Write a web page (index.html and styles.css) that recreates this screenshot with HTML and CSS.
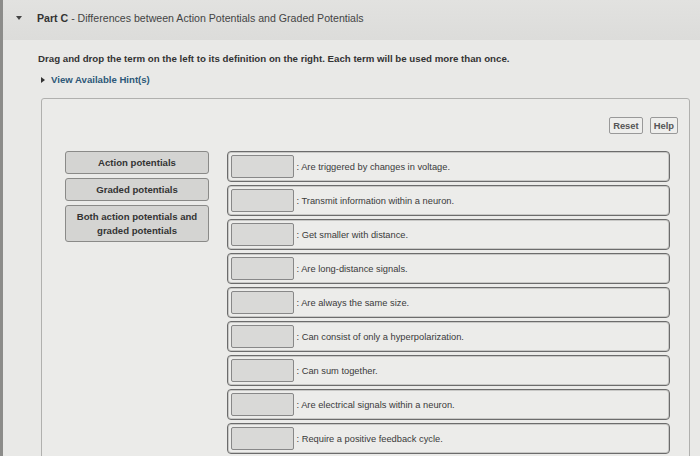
FILE: index.html
```html
<!DOCTYPE html>
<html>
<head>
<meta charset="utf-8">
<link rel="stylesheet" href="styles.css">
</head>
<body>
<div class="page">
  <div class="part-head">
    <span class="caret-down"></span>
    <span class="part-title"><b>Part C</b> - Differences between Action Potentials and Graded Potentials</span>
  </div>
  <div class="content">
    <p class="instr">Drag and drop the term on the left to its definition on the right. Each term will be used more than once.</p>
    <div class="hint"><span class="caret-right"></span>View Available Hint(s)</div>
    <div class="box">
      <div class="toolbar">
        <span class="btn">Reset</span>
        <span class="btn">Help</span>
      </div>
      <div class="dnd">
        <div class="terms">
          <div class="term">Action potentials</div>
          <div class="term">Graded potentials</div>
          <div class="term tall">Both action potentials and graded potentials</div>
        </div>
        <div class="targets">
          <div class="row"><span class="slot"></span><span class="def">: Are triggered by changes in voltage.</span></div>
          <div class="row"><span class="slot"></span><span class="def">: Transmit information within a neuron.</span></div>
          <div class="row"><span class="slot"></span><span class="def">: Get smaller with distance.</span></div>
          <div class="row"><span class="slot"></span><span class="def">: Are long-distance signals.</span></div>
          <div class="row"><span class="slot"></span><span class="def">: Are always the same size.</span></div>
          <div class="row"><span class="slot"></span><span class="def">: Can consist of only a hyperpolarization.</span></div>
          <div class="row"><span class="slot"></span><span class="def">: Can sum together.</span></div>
          <div class="row"><span class="slot"></span><span class="def">: Are electrical signals within a neuron.</span></div>
          <div class="row"><span class="slot"></span><span class="def">: Require a positive feedback cycle.</span></div>
        </div>
      </div>
    </div>
  </div>
</div>
</body>
</html>
```

FILE: styles.css
```css
html, body {
  margin: 0;
  padding: 0;
  height: 100%;
  overflow: hidden;
}
body {
  font-family: "Liberation Sans", Arial, sans-serif;
  background: #e8e8e6;
  color: #333;
}
.page {
  border-left: 3px solid #8c8c8a;
  min-height: 456px;
  background: #e9e9e7;
}
.part-head {
  height: 40px;
  display: flex;
  align-items: center;
  padding-left: 13px;
  padding-bottom: 4px;
  box-sizing: border-box;
  background: linear-gradient(#e2e2e0, #dcdcda);
  font-size: 10.6px;
  color: #444;
}
.part-head b {
  color: #333;
}
.caret-down {
  width: 0;
  height: 0;
  border-left: 3.5px solid transparent;
  border-right: 3.5px solid transparent;
  border-top: 4px solid #444;
  margin-right: 15px;
}
.content {
  padding-left: 35px;
}
.instr {
  margin: 0;
  padding-top: 13px;
  font-size: 9.7px;
  font-weight: bold;
  color: #333;
  line-height: 11px;
}
.hint {
  margin-top: 10px;
  display: flex;
  align-items: center;
  font-size: 9.6px;
  font-weight: bold;
  color: #2d5878;
  line-height: 11px;
}
.caret-right {
  width: 0;
  height: 0;
  border-top: 3.5px solid transparent;
  border-bottom: 3.5px solid transparent;
  border-left: 4px solid #333;
  margin-left: 3px;
  margin-right: 6px;
}
.box {
  margin-top: 13px;
  margin-left: 3px;
  width: 649px;
  height: 380px;
  border: 1px solid #b0b0ae;
  border-radius: 3px;
  background: #ebebe9;
  box-sizing: border-box;
  padding: 18px 11px 0 23px;
}
.toolbar {
  display: flex;
  justify-content: flex-end;
  gap: 7px;
}
.btn {
  font-size: 9.4px;
  font-weight: bold;
  color: #555;
  border: 1px solid #999;
  border-radius: 2px;
  background: #eeeeec;
  padding: 2px 3px;
  line-height: 11px;
}
.dnd {
  display: flex;
  gap: 18px;
  margin-top: 17px;
}
.terms {
  width: 144px;
  display: flex;
  flex-direction: column;
  gap: 4px;
}
.term {
  background: #d4d4d2;
  border: 1px solid #8a8a88;
  border-radius: 3px;
  font-size: 9.6px;
  font-weight: bold;
  color: #333;
  text-align: center;
  height: 23px;
  box-sizing: border-box;
  display: flex;
  align-items: center;
  justify-content: center;
  line-height: 14px;
}
.term.tall {
  height: 37px;
  padding: 0 6px;
}
.targets {
  width: 443px;
  display: flex;
  flex-direction: column;
  gap: 3px;
}
.row {
  height: 31px;
  box-sizing: border-box;
  border: 1.5px solid #6c6c6c;
  border-radius: 4px;
  box-shadow: inset 0 0 0 1px #c8c8c6;
  background: #ececea;
  display: flex;
  align-items: center;
  padding-left: 2.5px;
}
.slot {
  width: 63px;
  height: 23px;
  box-sizing: border-box;
  border: 1px solid #888;
  border-radius: 2px;
  background: #d9d9d7;
  margin-right: 3px;
}
.def {
  font-size: 9.3px;
  color: #3a3a3a;
}
```
